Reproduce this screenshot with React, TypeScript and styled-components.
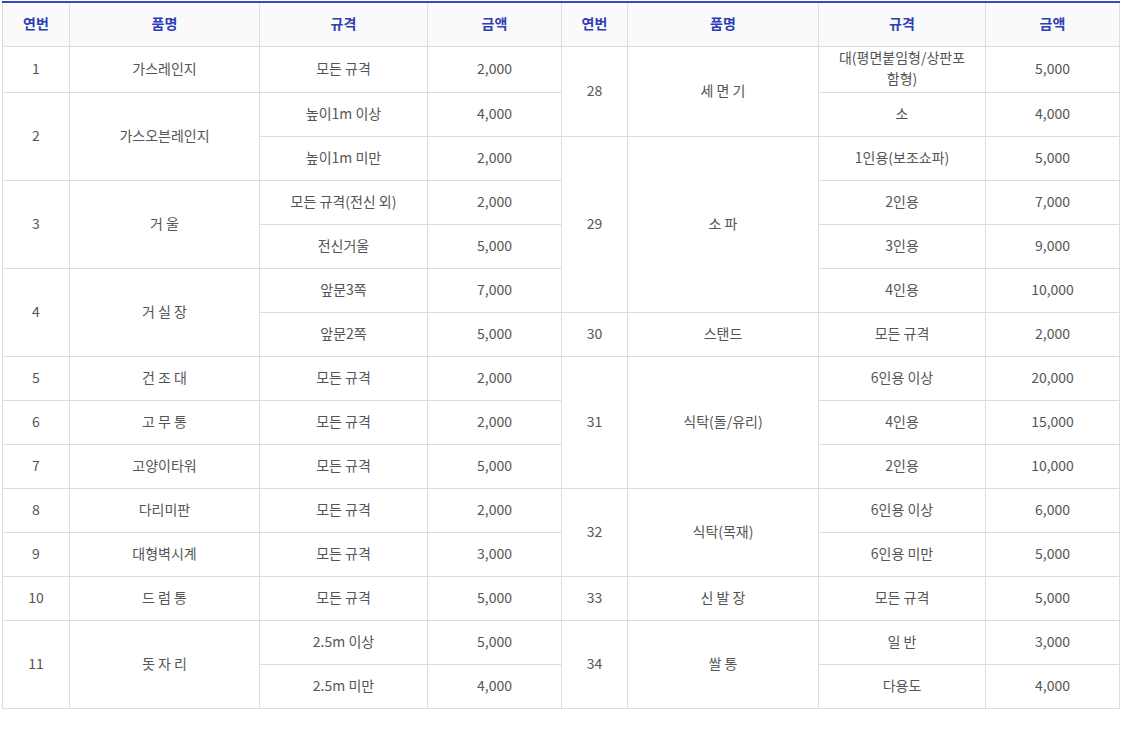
import React from 'react';
import styled, { createGlobalStyle } from 'styled-components';

const Global = createGlobalStyle`
  body { margin: 0; background: #fff; font-family: "Noto Sans CJK KR", "Noto Sans", sans-serif; }
`;

const Wrap = styled.div`
  padding: 1px 2px 0 2px;
`;

const Table = styled.table`
  width: 1117px;
  border-collapse: collapse;
  table-layout: fixed;
  border-top: 2px solid #3247c2;
`;

const Th = styled.th`
  height: 40px;
  background: #fafafa;
  color: #2d3db8;
  font-size: 14px;
  font-weight: 700;
  border: 1px solid #dddddd;
  border-top: none;
  padding: 0 0 3px;
`;

const Td = styled.td`
  height: 40px;
  border: 1px solid #dddddd;
  text-align: center;
  font-size: 14px;
  font-weight: 400;
  color: #555;
  padding: 0 14px 3px;
  line-height: 21px;
  word-break: break-all;
`;

type Cell = [string, number?];
const rows: Cell[][] = [
  [['1'], ['가스레인지'], ['모든 규격'], ['2,000'], ['28', 2], ['세 면 기', 2], ['대(평면붙임형/상판포함형)'], ['5,000']],
  [['2', 2], ['가스오븐레인지', 2], ['높이1m 이상'], ['4,000'], ['소'], ['4,000']],
  [['높이1m 미만'], ['2,000'], ['29', 4], ['소 파', 4], ['1인용(보조쇼파)'], ['5,000']],
  [['3', 2], ['거 울', 2], ['모든 규격(전신 외)'], ['2,000'], ['2인용'], ['7,000']],
  [['전신거울'], ['5,000'], ['3인용'], ['9,000']],
  [['4', 2], ['거 실 장', 2], ['앞문3쪽'], ['7,000'], ['4인용'], ['10,000']],
  [['앞문2쪽'], ['5,000'], ['30'], ['스탠드'], ['모든 규격'], ['2,000']],
  [['5'], ['건 조 대'], ['모든 규격'], ['2,000'], ['31', 3], ['식탁(돌/유리)', 3], ['6인용 이상'], ['20,000']],
  [['6'], ['고 무 통'], ['모든 규격'], ['2,000'], ['4인용'], ['15,000']],
  [['7'], ['고양이타워'], ['모든 규격'], ['5,000'], ['2인용'], ['10,000']],
  [['8'], ['다리미판'], ['모든 규격'], ['2,000'], ['32', 2], ['식탁(목재)', 2], ['6인용 이상'], ['6,000']],
  [['9'], ['대형벽시계'], ['모든 규격'], ['3,000'], ['6인용 미만'], ['5,000']],
  [['10'], ['드 럼 통'], ['모든 규격'], ['5,000'], ['33'], ['신 발 장'], ['모든 규격'], ['5,000']],
  [['11', 2], ['돗 자 리', 2], ['2.5m 이상'], ['5,000'], ['34', 2], ['쌀 통', 2], ['일 반'], ['3,000']],
  [['2.5m 미만'], ['4,000'], ['다용도'], ['4,000']],
];

const widths = [67, 190, 168, 134, 66, 191, 167, 134];
const heads = ['연번', '품명', '규격', '금액', '연번', '품명', '규격', '금액'];

export default function App() {
  return (
    <Wrap>
      <Global />
      <Table>
        <colgroup>
          {widths.map((w, i) => <col key={i} style={{ width: w }} />)}
        </colgroup>
        <thead>
          <tr>{heads.map((h, i) => <Th key={i}>{h}</Th>)}</tr>
        </thead>
        <tbody>
          {rows.map((r, i) => (
            <tr key={i}>
              {r.map(([t, rs], j) => <Td key={j} rowSpan={rs}>{t}</Td>)}
            </tr>
          ))}
        </tbody>
      </Table>
    </Wrap>
  );
}
